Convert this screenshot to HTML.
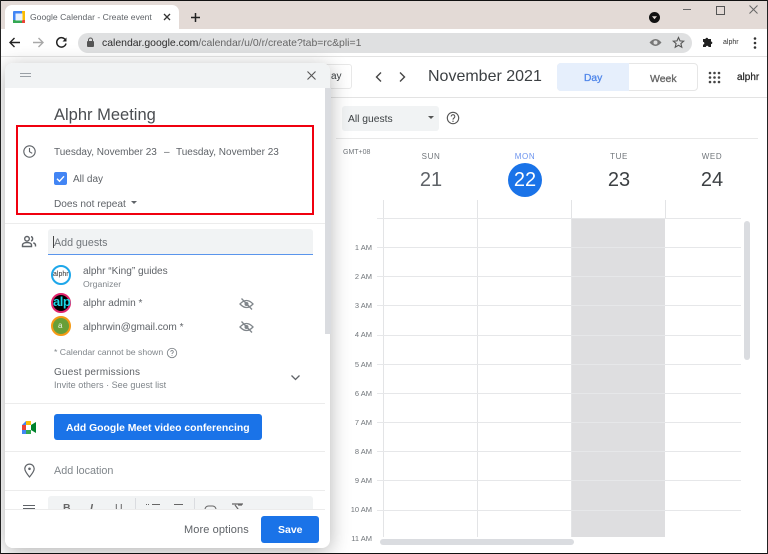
<!DOCTYPE html>
<html><head><meta charset="utf-8">
<style>
html,body{margin:0;padding:0;background:#fff}
#p{position:relative;width:768px;height:554px;overflow:hidden;background:#fff;font-family:"Liberation Sans",sans-serif;color:#5f6368;filter:blur(.35px)}
#p div,#p svg{position:absolute}
.t{white-space:nowrap;line-height:1}
.hl{left:377px;width:364px;height:1px;background:#e6e7e9}
.vl{top:200px;height:337px;width:1px;background:#e3e4e6}
.h{font-size:7.5px;color:#70757a;right:396px;text-align:right}
.d{font-size:8px;letter-spacing:.6px;color:#70757a;width:60px;text-align:center;top:153px}
.n{font-size:20px;color:#5f6368;width:60px;text-align:center;top:170px}
</style></head><body>
<div id="p">
<!-- browser chrome -->
<div style="left:0;top:0;width:768px;height:29px;background:#e3dad6"></div>
<div style="left:5px;top:5px;width:174px;height:25px;background:#fff;border-radius:7px 7px 0 0"></div>
<svg style="left:13px;top:11px" width="12" height="12" viewBox="0 0 12 12"><rect width="12" height="12" rx="1" fill="#4285f4"/><rect x="0" y="9" width="9" height="3" fill="#34a853"/><rect x="9" y="0" width="3" height="9" fill="#fbbc04"/><rect x="9" y="9" width="3" height="3" fill="#ea4335"/><rect x="2.500" y="2.500" width="7" height="7" fill="#e8f0fe"/></svg>
<div class="t" style="left:30px;top:13px;font-size:8.600px;color:#5f6368">Google Calendar - Create event</div>
<svg style="left:162px;top:12px" width="10" height="10" viewBox="0 0 10 10"><path d="M2 2l6 6M8 2l-6 6" stroke="#333" stroke-width="1.300"/></svg>
<svg style="left:189px;top:11px" width="13" height="13" viewBox="0 0 13 13"><path d="M6.500 2v9M2 6.500h9" stroke="#222" stroke-width="1.500"/></svg>
<div style="left:0;top:29px;width:768px;height:27px;background:#fff"></div>
<div style="left:0;top:56px;width:768px;height:1px;background:#e3e3e3"></div>
<svg style="left:8px;top:36px" width="13" height="13" viewBox="0 0 13 13"><path d="M12 6.500H2M6.500 2L2 6.500 6.500 11" fill="none" stroke="#222" stroke-width="1.400"/></svg>
<svg style="left:32px;top:36px" width="13" height="13" viewBox="0 0 13 13"><path d="M1 6.500h10M6.500 2L11 6.500 6.500 11" fill="none" stroke="#a8a8a8" stroke-width="1.400"/></svg>
<svg style="left:55px;top:36px" width="13" height="13" viewBox="0 0 13 13"><path d="M10.500 4A4.700 4.700 0 1 0 11 7.500" fill="none" stroke="#222" stroke-width="1.500"/><path d="M11.500 1.500v4h-4z" fill="#222"/></svg>
<div style="left:78px;top:33px;width:614px;height:20px;background:#dfe0e1;border-radius:10px"></div>
<svg style="left:86px;top:37px" width="9" height="11" viewBox="0 0 9 11"><rect x="1" y="4" width="7" height="6" rx="1" fill="#555"/><path d="M2.500 4V3a2 2 0 0 1 4 0v1" fill="none" stroke="#555" stroke-width="1"/></svg>
<div class="t" style="left:102px;top:39px;font-size:10.450px"><span style="color:#2c2c2c">calendar.google.com</span><span style="color:#666">/calendar/u/0/r/create?tab=rc&amp;pli=1</span></div>
<svg style="left:649px;top:37px" width="13" height="11" viewBox="0 0 13 11"><path d="M.5 5.500Q6.500-1.500 12.500 5.500 6.500 12.500.5 5.500z" fill="#777"/><circle cx="6.500" cy="5.500" r="2" fill="#ddd"/></svg>
<svg style="left:672px;top:36px" width="13" height="13" viewBox="0 0 13 13"><path d="M6.500 1.500l1.500 3.400 3.700.3-2.800 2.400.9 3.600-3.300-1.900-3.300 1.900.9-3.600L1.300 5.200 5 4.900z" fill="none" stroke="#555" stroke-width="1.100"/></svg>
<svg style="left:702px;top:36px" width="12" height="12" viewBox="0 0 12 12"><path d="M1 3h2.500a1.300 1.300 0 0 1 2.600 0H9v2.500a1.300 1.300 0 0 1 0 2.600V11H6.500a1.300 1.300 0 0 0-2.600 0H1V8.500a1.300 1.300 0 0 0 0-2.600z" fill="#222"/></svg>
<div class="t" style="left:723px;top:39px;font-size:7px;color:#333">alphr</div>
<svg style="left:753px;top:36px" width="4" height="14" viewBox="0 0 4 14"><circle cx="2" cy="2.500" r="1.300" fill="#333"/><circle cx="2" cy="7" r="1.300" fill="#333"/><circle cx="2" cy="11.500" r="1.300" fill="#333"/></svg>
<svg style="left:648px;top:11px" width="13" height="13" viewBox="0 0 13 13"><circle cx="6.500" cy="6.500" r="5.500" fill="#111"/><path d="M4 5.200h5L6.500 8.300z" fill="#e3dad6"/></svg>
<div style="left:683px;top:9px;width:8px;height:1px;background:#666"></div>
<div style="left:716px;top:6px;width:7px;height:7px;border:1px solid #555"></div>
<svg style="left:748px;top:4px" width="11" height="11" viewBox="0 0 11 11"><path d="M1.500 1.500l8 8M9.500 1.500l-8 8" stroke="#666" stroke-width="1"/></svg>

<!-- calendar header -->
<div style="left:320px;top:64px;width:32px;height:25px;border:1px solid #e8e8e8;border-radius:3px;box-sizing:border-box"></div>
<div class="t" style="left:331px;top:72px;font-size:10px;color:#3c4043">ay</div>
<svg style="left:374px;top:71px" width="10" height="12" viewBox="0 0 10 12"><path d="M7 1.500L2.500 6 7 10.500" fill="none" stroke="#444" stroke-width="1.400"/></svg>
<svg style="left:397px;top:71px" width="10" height="12" viewBox="0 0 10 12"><path d="M3 1.500L7.500 6 3 10.500" fill="none" stroke="#444" stroke-width="1.400"/></svg>
<div class="t" style="left:428px;top:69px;font-size:16px;color:#3c4043">November 2021</div>
<div style="left:557px;top:63px;width:141px;height:28px;border:1px solid #e6e6e6;border-radius:4px;box-sizing:border-box"></div>
<div style="left:557px;top:63px;width:72px;height:28px;background:#e6effc;border-radius:4px 0 0 4px"></div>
<div class="t" style="left:584px;top:74px;font-size:10.300px;color:#4f86ea;-webkit-text-stroke:.3px #4f86ea">Day</div>
<div class="t" style="left:650px;top:74px;font-size:10.500px;color:#666;-webkit-text-stroke:.3px #666">Week</div>
<svg style="left:708px;top:71px" width="13" height="13" viewBox="0 0 13 13" fill="#444"><circle cx="2" cy="2" r="1.300"/><circle cx="6.500" cy="2" r="1.300"/><circle cx="11" cy="2" r="1.300"/><circle cx="2" cy="6.500" r="1.300"/><circle cx="6.500" cy="6.500" r="1.300"/><circle cx="11" cy="6.500" r="1.300"/><circle cx="2" cy="11" r="1.300"/><circle cx="6.500" cy="11" r="1.300"/><circle cx="11" cy="11" r="1.300"/></svg>
<div class="t" style="left:737px;top:73px;font-size:10px;color:#222;-webkit-text-stroke:.2px #222">alphr</div>
<div style="left:330px;top:97px;width:438px;height:1px;background:#e3e3e3"></div>
<div style="left:342px;top:106px;width:97px;height:25px;background:#f1f3f4;border-radius:3px"></div>
<div class="t" style="left:348px;top:115px;font-size:10.300px;color:#3c4043">All guests</div>
<div style="left:428px;top:116px;width:0;height:0;border:3px solid transparent;border-top:3px solid #555"></div>
<svg style="left:446px;top:111px" width="14" height="14" viewBox="0 0 14 14"><circle cx="7" cy="7" r="5.700" fill="none" stroke="#555" stroke-width="1.100"/><path d="M5.200 5.500a1.800 1.800 0 1 1 2.800 1.500c-.7.500-1 .8-1 1.600" fill="none" stroke="#555" stroke-width="1.100"/><circle cx="7" cy="10.300" r=".7" fill="#555"/></svg>
<div style="left:336px;top:138px;width:422px;height:1px;background:#e8e8e8"></div>

<!-- day headers -->
<div class="t" style="left:343px;top:149px;font-size:7px;color:#70757a">GMT+08</div>
<div class="t d" style="left:401px">SUN</div>
<div class="t d" style="left:495px;color:#6b93ee">MON</div>
<div class="t d" style="left:589px">TUE</div>
<div class="t d" style="left:682px">WED</div>
<div class="t n" style="left:401px">21</div>
<div style="left:508px;top:163px;width:34px;height:34px;border-radius:50%;background:#1a73e8"></div>
<div class="t n" style="left:495px;color:#fff">22</div>
<div class="t n" style="left:589px;color:#3c4043">23</div>
<div class="t n" style="left:682px;color:#3c4043">24</div>

<!-- grid -->
<div style="left:571px;top:218px;width:94px;height:319px;background:#dedee0"></div>
<div class="vl" style="left:383px"></div>
<div class="vl" style="left:477px"></div>
<div class="vl" style="left:571px"></div>
<div class="vl" style="left:665px;top:200px;height:18px"></div>
<div class="hl" style="top:218px"></div>
<div class="hl" style="top:247px"></div>
<div class="hl" style="top:276px"></div>
<div class="hl" style="top:305px"></div>
<div class="hl" style="top:335px"></div>
<div class="hl" style="top:364px"></div>
<div class="hl" style="top:393px"></div>
<div class="hl" style="top:422px"></div>
<div class="hl" style="top:451px"></div>
<div class="hl" style="top:480px"></div>
<div class="hl" style="top:510px"></div>
<div class="t h" style="top:244px">1 AM</div>
<div class="t h" style="top:273px">2 AM</div>
<div class="t h" style="top:302px">3 AM</div>
<div class="t h" style="top:331px">4 AM</div>
<div class="t h" style="top:361px">5 AM</div>
<div class="t h" style="top:390px">6 AM</div>
<div class="t h" style="top:419px">7 AM</div>
<div class="t h" style="top:448px">8 AM</div>
<div class="t h" style="top:477px">9 AM</div>
<div class="t h" style="top:506px">10 AM</div>
<div class="t h" style="top:535px">11 AM</div>
<div style="left:744px;top:221px;width:6px;height:139px;background:#dadce0;border-radius:3px"></div>
<div style="left:380px;top:539px;width:194px;height:6px;background:#dadce0;border-radius:3px"></div>

<!-- modal -->
<div style="left:5px;top:63px;width:325px;height:485px;background:#fff;border-radius:8px;box-shadow:0 4px 20px rgba(0,0,0,.3)"></div>
<div style="left:5px;top:63px;width:325px;height:25px;background:#f1f3f4;border-radius:8px 8px 0 0"></div>
<div style="left:20px;top:73px;width:11px;height:1px;background:#9aa0a6"></div>
<div style="left:20px;top:76px;width:11px;height:1px;background:#9aa0a6"></div>
<svg style="left:306px;top:70px" width="11" height="11" viewBox="0 0 11 11"><path d="M1.500 1.500l8 8M9.500 1.500l-8 8" stroke="#555" stroke-width="1.100"/></svg>
<div style="left:325px;top:88px;width:6px;height:246px;background:#dadce0"></div>
<div class="t" style="left:54px;top:107px;font-size:16.500px;color:#4a4d51">Alphr Meeting</div>

<svg style="left:22px;top:144px" width="15" height="15" viewBox="0 0 15 15"><circle cx="7.500" cy="7.500" r="5.700" fill="none" stroke="#5f6368" stroke-width="1.100"/><path d="M7.500 4v3.700l2.700 1.600" fill="none" stroke="#5f6368" stroke-width="1.100"/></svg>
<div class="t" style="left:54px;top:148px;font-size:10px">Tuesday, November 23</div>
<div class="t" style="left:164px;top:148px;font-size:10px">–</div>
<div class="t" style="left:176px;top:148px;font-size:10px">Tuesday, November 23</div>
<div style="left:54px;top:172px;width:13px;height:13px;background:#4285f4;border-radius:2px"></div>
<svg style="left:54px;top:172px" width="13" height="13" viewBox="0 0 13 13"><path d="M3 6.800l2.500 2.400L10 4.300" fill="none" stroke="#fff" stroke-width="1.400"/></svg>
<div class="t" style="left:73px;top:175px;font-size:10px">All day</div>
<div class="t" style="left:54px;top:200px;font-size:10.100px">Does not repeat</div>
<div style="left:131px;top:201px;width:0;height:0;border:3px solid transparent;border-top:3px solid #5f6368"></div>
<div style="left:16px;top:125px;width:298px;height:90px;border:2px solid #f0000f;box-sizing:border-box"></div>
<div style="left:5px;top:223px;width:320px;height:1px;background:#ececec"></div>

<svg style="left:21px;top:235px" width="16" height="13" viewBox="0 0 16 13"><circle cx="6" cy="3.800" r="2.300" fill="none" stroke="#5f6368" stroke-width="1.400"/><path d="M1.500 11.500V10c0-1.500 2-2.500 4.500-2.500s4.500 1 4.500 2.500v1.500z" fill="none" stroke="#5f6368" stroke-width="1.400"/><path d="M10 1.600a2.300 2.300 0 0 1 0 4.400M12.300 7.800c1.300.5 2.200 1.200 2.200 2.200v1.500" fill="none" stroke="#5f6368" stroke-width="1.400"/></svg>
<div style="left:48px;top:229px;width:265px;height:26px;background:#f1f3f4;border-radius:3px 3px 0 0;border-bottom:1px solid #5a95ec;box-sizing:border-box"></div>
<div style="left:53px;top:236px;width:1px;height:12px;background:#444"></div>
<div class="t" style="left:54px;top:238px;font-size:10.700px;color:#70757a">Add guests</div>

<div style="left:51px;top:265px;width:20px;height:20px;border:2px solid #1ea7ea;border-radius:50%;box-sizing:border-box;background:#fff"></div>
<div class="t" style="left:53px;top:271px;font-size:7px;color:#333">alphr</div>
<div class="t" style="left:83px;top:267px;font-size:10.100px">alphr “King” guides</div>
<div class="t" style="left:83px;top:280px;font-size:8.700px;color:#80868b">Organizer</div>
<div style="left:51px;top:293px;width:20px;height:20px;background:#000;border:2px solid #e0246c;border-radius:50%;box-sizing:border-box"></div>
<div class="t" style="left:53px;top:295px;font-size:13px;font-weight:bold;color:#19d7e6;letter-spacing:-.5px">alp</div>
<div class="t" style="left:83px;top:299px;font-size:10.100px">alphr admin *</div>
<div style="left:51px;top:316px;width:20px;height:20px;background:#689f38;border:2px solid #f59a14;border-radius:50%;box-sizing:border-box"></div>
<div class="t" style="left:58px;top:322px;font-size:8px;color:#eef3e4">a</div>
<div class="t" style="left:83px;top:323px;font-size:10.100px">alphrwin@gmail.com *</div>
<svg style="left:239px;top:297px" width="15" height="14" viewBox="0 0 15 14"><path d="M1 7Q7.500 0 14 7 7.500 14 1 7z" fill="none" stroke="#80868b" stroke-width="1.300"/><circle cx="7.500" cy="7" r="2" fill="#80868b"/><path d="M2.500 1.500l10.500 11" stroke="#80868b" stroke-width="1.300"/></svg>
<svg style="left:239px;top:320px" width="15" height="14" viewBox="0 0 15 14"><path d="M1 7Q7.500 0 14 7 7.500 14 1 7z" fill="none" stroke="#80868b" stroke-width="1.300"/><circle cx="7.500" cy="7" r="2" fill="#80868b"/><path d="M2.500 1.500l10.500 11" stroke="#80868b" stroke-width="1.300"/></svg>

<div class="t" style="left:54px;top:348px;font-size:8.700px;color:#80868b">* Calendar cannot be shown</div>
<svg style="left:166px;top:347px" width="12" height="12" viewBox="0 0 12 12"><circle cx="6" cy="6" r="4.700" fill="none" stroke="#80868b" stroke-width=".9"/><path d="M4.700 4.800a1.300 1.300 0 1 1 2 1.100c-.5.300-.7.600-.7 1.100" fill="none" stroke="#80868b" stroke-width=".9"/><circle cx="6" cy="8.500" r=".5" fill="#80868b"/></svg>
<div class="t" style="left:54px;top:368px;font-size:10px;letter-spacing:.2px">Guest permissions</div>
<div class="t" style="left:54px;top:381px;font-size:9.100px;color:#80868b">Invite others · See guest list</div>
<svg style="left:290px;top:373px" width="11" height="9" viewBox="0 0 11 9"><path d="M1.500 2.500l4 4 4-4" fill="none" stroke="#5f6368" stroke-width="1.300"/></svg>
<div style="left:5px;top:403px;width:320px;height:1px;background:#ececec"></div>

<svg style="left:22px;top:421px" width="15" height="13" viewBox="0 0 15 13"><path d="M0 4l4-4h5v13H4l-4 0z" fill="#4285f4"/><path d="M0 4h4v5H0z" fill="#ea4335"/><path d="M4 0h5v4H4z" fill="#fbbc04"/><path d="M4 9h5v4H4z" fill="#34a853"/><path d="M9 4l5-3v11L9 9z" fill="#00832d"/><rect x="4" y="4" width="5" height="5" fill="#fff"/></svg>
<div style="left:54px;top:414px;width:208px;height:26px;background:#1a73e8;border-radius:3px"></div>
<div class="t" style="left:66px;top:424px;font-size:10.400px;font-weight:bold;color:#fff;white-space:nowrap">Add Google Meet video conferencing</div>
<div style="left:5px;top:451px;width:320px;height:1px;background:#ececec"></div>
<svg style="left:23px;top:463px" width="13" height="15" viewBox="0 0 13 15"><path d="M6.500 14C3 9.800 1.800 7.800 1.800 5.800a4.700 4.700 0 0 1 9.400 0c0 2-1.200 4-4.700 8.200z" fill="none" stroke="#5f6368" stroke-width="1.200"/><circle cx="6.500" cy="5.800" r="1.300" fill="#5f6368"/></svg>
<div class="t" style="left:54px;top:466px;font-size:10.800px;color:#80868b">Add location</div>
<div style="left:5px;top:490px;width:320px;height:1px;background:#ececec"></div>

<div style="left:48px;top:496px;width:265px;height:20px;background:#f1f3f4;border-radius:3px 3px 0 0"></div>
<div style="left:23px;top:505px;width:12px;height:1px;background:#5f6368"></div>
<div style="left:23px;top:508px;width:12px;height:1px;background:#5f6368"></div>
<div class="t" style="left:63px;top:503px;font-size:10.500px;font-weight:bold;color:#666">B</div>
<div class="t" style="left:90px;top:503px;font-size:10.500px;font-weight:bold;font-style:italic;color:#666">I</div>
<div class="t" style="left:115px;top:503px;font-size:10.500px;color:#666;text-decoration:underline">U</div>
<div style="left:135px;top:498px;width:1px;height:16px;background:#dadce0"></div>
<div style="left:194px;top:498px;width:1px;height:16px;background:#dadce0"></div>
<div style="left:152px;top:504px;width:8px;height:5px;border-top:1px solid #666;border-bottom:1px solid #666"></div>
<div style="left:146px;top:504px;width:3px;height:5px;border-top:1px dotted #666;border-bottom:1px dotted #666"></div>
<div style="left:174px;top:504px;width:9px;height:5px;border-top:1px solid #666;border-bottom:1px solid #666"></div>
<svg style="left:204px;top:505px" width="14" height="9" viewBox="0 0 14 9"><rect x="1" y="1" width="11" height="7" rx="3.500" fill="none" stroke="#666" stroke-width="1"/><path d="M4.500 4.500h4" stroke="#666"/></svg>
<svg style="left:231px;top:503px" width="13" height="10" viewBox="0 0 13 10"><path d="M1 1h11M4 2l3 4 1 4M7 2h4" stroke="#666" stroke-width="1.200" fill="none"/></svg>

<div style="left:5px;top:509px;width:320px;height:39px;background:#fff;border-top:1px solid #ececec;box-sizing:border-box;border-radius:0 0 8px 8px"></div>
<div class="t" style="left:184px;top:525px;font-size:11px;color:#5f6368;letter-spacing:.1px">More options</div>
<div style="left:261px;top:516px;width:58px;height:27px;background:#1a73e8;border-radius:3px"></div>
<div class="t" style="left:278px;top:525px;font-size:10.500px;font-weight:bold;color:#fff">Save</div>

<!-- image border -->
<div style="left:0;top:0;width:768px;height:1px;background:#111"></div>
<div style="left:0;top:553px;width:768px;height:1px;background:#111"></div>
<div style="left:0;top:0;width:1px;height:554px;background:#222"></div>
<div style="left:767px;top:0;width:1px;height:554px;background:#222"></div>
</div>
</body></html>
